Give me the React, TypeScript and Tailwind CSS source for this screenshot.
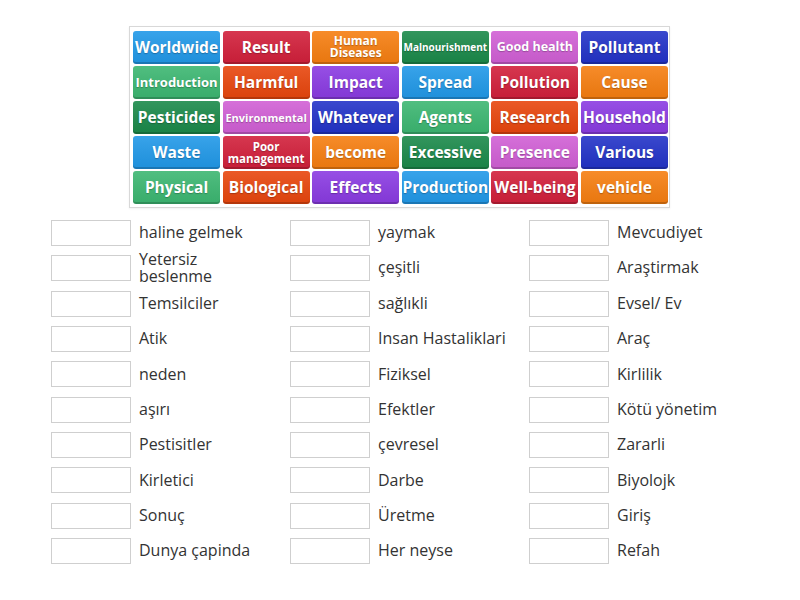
import React from "react";

const C = {
  blue: "bg-[#2299e8]",
  red: "bg-[#d2213c]",
  orange: "bg-[#f67f12]",
  dgreen: "bg-[#1c8a4b]",
  orchid: "bg-[#d160d5]",
  dblue: "bg-[#2434c8]",
  mgreen: "bg-[#3db772]",
  rorange: "bg-[#e8470f]",
  purple: "bg-[#8b3ce2]",
};

type Tile = { t: React.ReactNode; c: string; s: string };

const tiles: Tile[] = [
  { t: "Worldwide", c: C.blue, s: "text-[15.5px]" },
  { t: "Result", c: C.red, s: "text-[15.5px]" },
  { t: <>Human<br />Diseases</>, c: C.orange, s: "text-[12px] leading-[13px]" },
  { t: "Malnourishment", c: C.dgreen, s: "text-[10px]" },
  { t: "Good health", c: C.orchid, s: "text-[12.5px]" },
  { t: "Pollutant", c: C.dblue, s: "text-[15.5px]" },

  { t: "Introduction", c: C.mgreen, s: "text-[13px]" },
  { t: "Harmful", c: C.rorange, s: "text-[15.5px]" },
  { t: "Impact", c: C.purple, s: "text-[15.5px]" },
  { t: "Spread", c: C.blue, s: "text-[15.5px]" },
  { t: "Pollution", c: C.red, s: "text-[15.5px]" },
  { t: "Cause", c: C.orange, s: "text-[15.5px]" },

  { t: "Pesticides", c: C.dgreen, s: "text-[15.5px]" },
  { t: "Environmental", c: C.orchid, s: "text-[11px]" },
  { t: "Whatever", c: C.dblue, s: "text-[15.5px]" },
  { t: "Agents", c: C.mgreen, s: "text-[15.5px]" },
  { t: "Research", c: C.rorange, s: "text-[15.5px]" },
  { t: "Household", c: C.purple, s: "text-[15.5px]" },

  { t: "Waste", c: C.blue, s: "text-[15.5px]" },
  { t: <>Poor<br />management</>, c: C.red, s: "text-[11.5px] leading-[14px]" },
  { t: "become", c: C.orange, s: "text-[15.5px]" },
  { t: "Excessive", c: C.dgreen, s: "text-[15.5px]" },
  { t: "Presence", c: C.orchid, s: "text-[15.5px]" },
  { t: "Various", c: C.dblue, s: "text-[15.5px]" },

  { t: "Physical", c: C.mgreen, s: "text-[15.5px]" },
  { t: "Biological", c: C.rorange, s: "text-[15.5px]" },
  { t: "Effects", c: C.purple, s: "text-[15.5px]" },
  { t: "Production", c: C.blue, s: "text-[15.5px]" },
  { t: "Well-being", c: C.red, s: "text-[15.5px]" },
  { t: "vehicle", c: C.orange, s: "text-[15.5px]" },
];

const cols: React.ReactNode[][] = [
  [
    "haline gelmek",
    <>Yetersiz<br />beslenme</>,
    "Temsilciler",
    "Atik",
    "neden",
    "aşırı",
    "Pestisitler",
    "Kirletici",
    "Sonuç",
    "Dunya çapinda",
  ],
  [
    "yaymak",
    "çeşitli",
    "sağlıkli",
    "Insan Hastaliklari",
    "Fiziksel",
    "Efektler",
    "çevresel",
    "Darbe",
    "Üretme",
    "Her neyse",
  ],
  [
    "Mevcudiyet",
    "Araştirmak",
    "Evsel/ Ev",
    "Araç",
    "Kirlilik",
    "Kötü yönetim",
    "Zararli",
    "Biyolojk",
    "Giriş",
    "Refah",
  ],
];

export default function App() {
  return (
    <div
      className="w-[800px] h-[600px] bg-white overflow-hidden"
      style={{ fontFamily: '"Open Sans", "Noto Sans", sans-serif' }}
    >
      <div className="pt-[26px] flex justify-center">
        <div className="ml-[-1px] border border-[#d8d8d8] pl-[3px] pr-[1px] pt-[4px] pb-[3px] shadow-[0_1px_2px_rgba(0,0,0,0.06)]">
          <div className="grid grid-cols-[repeat(6,87px)] auto-rows-[32.5px] gap-x-[2.6px] gap-y-[2.6px]">
            {tiles.map((tile, i) => (
              <div
                key={i}
                className={`${tile.c} bg-linear-to-b from-white/10 to-black/5 rounded-[3px] shadow-[inset_0_-2px_0_rgba(0,0,0,0.18)] flex items-center justify-center text-center text-white font-bold leading-none whitespace-nowrap [text-shadow:0_1px_1px_rgba(0,0,0,0.25)] ${tile.s}`}
              >
                <span>{tile.t}</span>
              </div>
            ))}
          </div>
        </div>
      </div>

      <div className="flex pl-[51px] pt-[12px]">
        {cols.map((col, ci) => (
          <div key={ci} className="w-[239px] flex flex-col gap-[9.37px]">
            {col.map((label, ri) => (
              <div key={ri} className="h-[26px] flex items-center">
                <div className="w-[80px] h-[26px] border border-[#cfcfcf] bg-white shrink-0" />
                <div className="ml-[8px] text-[16px] leading-[17.5px] text-[#333333] whitespace-nowrap">
                  {label}
                </div>
              </div>
            ))}
          </div>
        ))}
      </div>
    </div>
  );
}
